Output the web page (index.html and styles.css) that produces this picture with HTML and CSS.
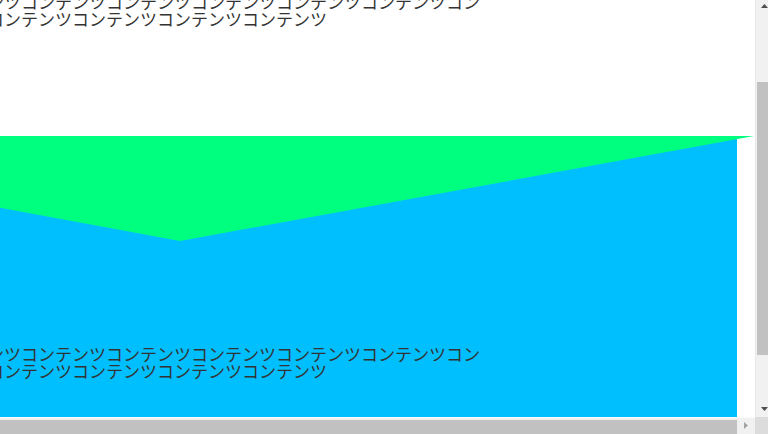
FILE: index.html
```html
<!DOCTYPE html>
<html lang="ja">
<head>
<meta charset="utf-8">
<title>コンテンツ</title>
<link rel="stylesheet" href="styles.css">
</head>
<body>
<div class="window">
  <div class="viewport">
    <div class="doc">
      <p class="copy">コンテンツコンテンツコンテンツコンテンツコンテンツコンテンツコンテンツコンテンツコンテンツコンテンツコンテンツ</p>
      <section class="band">
        <div class="wedge"></div>
        <p class="copy">コンテンツコンテンツコンテンツコンテンツコンテンツコンテンツコンテンツコンテンツコンテンツコンテンツコンテンツ</p>
      </section>
    </div>
  </div>
  <div class="vscroll">
    <div class="vbtn vbtn-up">
      <svg width="7" height="4" viewBox="0 0 7 4"><polygon points="0,4 7,4 3.5,0" fill="#505050"/></svg>
    </div>
    <div class="vtrack"><div class="vthumb"></div></div>
    <div class="vbtn vbtn-down">
      <svg width="7" height="4" viewBox="0 0 7 4"><polygon points="0,0 7,0 3.5,4" fill="#505050"/></svg>
    </div>
  </div>
  <div class="hscroll">
    <div class="hthumb"></div>
    <div class="hbtn">
      <svg width="4" height="7" viewBox="0 0 4 7"><polygon points="0,0 4,3.5 0,7" fill="#a3a3a3"/></svg>
    </div>
  </div>
  <div class="corner"></div>
</div>
</body>
</html>
```

FILE: styles.css
```css
html, body {
  margin: 0;
  padding: 0;
  width: 768px;
  height: 434px;
  overflow: hidden;
  background: #ffffff;
  font-family: "Noto Sans CJK JP", "Noto Sans", sans-serif;
}

.window {
  display: grid;
  grid-template-columns: 755px 13px;
  grid-template-rows: 417px 17px;
  width: 768px;
  height: 434px;
}

.viewport {
  overflow: hidden;
  background: #ffffff;
}

.doc {
  width: 820px;
  margin: -7px 0 0 -64px;
}

.copy {
  width: 550px;
  margin: 0;
  font-size: 17px;
  line-height: 17px;
  color: #333333;
}

.band {
  position: relative;
  width: 801px;
  margin-top: 109px;
  padding: 209px 0 38px;
  background: #00bfff;
}

.band .copy {
  position: relative;
}

.wedge {
  position: absolute;
  top: 0;
  left: 0;
  width: 818px;
  height: 105px;
  background: #00ff7f;
  clip-path: polygon(0 0, 818px 0, 244px 105px, 0 60px);
}

.vscroll {
  display: flex;
  flex-direction: column;
  background: #f1f1f1;
  border-left: 1px solid #e8e8e8;
  box-sizing: border-box;
}

.vbtn {
  display: flex;
  align-items: center;
  padding-left: 5px;
}

.vbtn-up {
  height: 12px;
}

.vbtn-down {
  height: 17px;
}

.vtrack {
  flex: 1;
  padding-top: 70px;
  padding-left: 1px;
}

.vthumb {
  height: 273px;
  background: #c1c1c1;
}

.hscroll {
  display: flex;
  background: #f1f1f1;
  padding-top: 2px;
  box-sizing: border-box;
  border-top: 1px solid #fafafa;
}

.hthumb {
  width: 737px;
  background: #c1c1c1;
}

.hbtn {
  flex: 1;
  display: flex;
  align-items: center;
  padding-left: 7px;
  margin-top: -3px;
}

.corner {
  background: #dcdcdc;
}
```
